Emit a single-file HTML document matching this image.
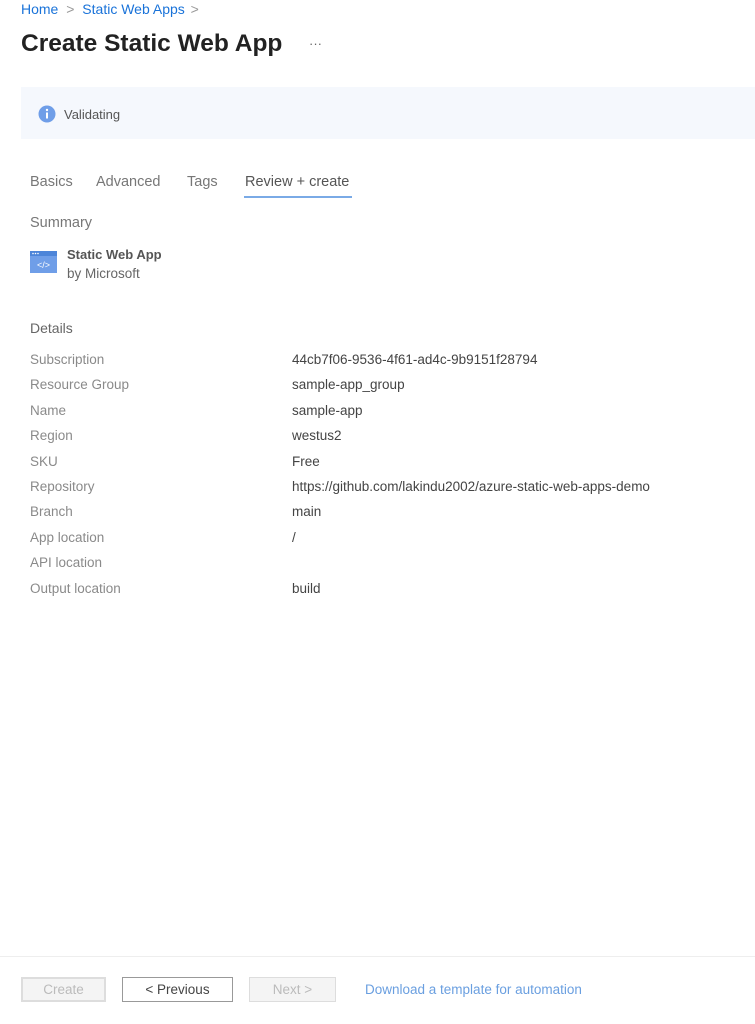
<!DOCTYPE html>
<html><head><meta charset="utf-8"><style>
body{margin:0;width:755px;height:1024px;background:#fff;font-family:"Liberation Sans",sans-serif;position:relative;overflow:hidden}
.a{position:absolute;white-space:nowrap}
.lbl{color:#8a8a8a;font-size:13.5px}
.val{color:#444;font-size:13.5px}
.btn{position:absolute;top:977px;height:25px;box-sizing:border-box;border:1px solid #ccc;font-size:13.5px;text-align:center;line-height:23px}
</style></head><body>
<div class="a" style="left:21px;top:1px;font-size:14px;color:#1a73d9">Home <span style="color:#999;margin:0 4px">&gt;</span> Static Web Apps <span style="color:#999;margin-left:2px">&gt;</span></div>
<div class="a" style="left:21px;top:30px;font-size:24.5px;color:#222;font-weight:600">Create Static Web App</div>
<div class="a" style="left:309px;top:36px;font-size:13px;color:#666">···</div>
<div class="a" style="left:21px;top:87px;width:734px;height:52px;background:#f5f8fd"></div>
<svg class="a" style="left:38px;top:105px" width="18" height="18" viewBox="0 0 18 18"><circle cx="9" cy="9" r="8.5" fill="#6f9ee8"/><rect x="8" y="7.5" width="2" height="6" fill="#fff"/><circle cx="9" cy="5" r="1.2" fill="#fff"/></svg>
<div class="a" style="left:64px;top:107px;font-size:13px;color:#555">Validating</div>
<div class="a" style="left:30px;top:174px;font-size:14.5px;color:#777">Basics</div>
<div class="a" style="left:96px;top:174px;font-size:14.5px;color:#777">Advanced</div>
<div class="a" style="left:187px;top:174px;font-size:14.5px;color:#777">Tags</div>
<div class="a" style="left:245px;top:174px;font-size:14.5px;color:#555">Review + create</div>
<div class="a" style="left:244px;top:196px;width:108px;height:2px;background:#7aaae6"></div>
<div class="a" style="left:30px;top:215px;font-size:14.5px;color:#777">Summary</div>
<svg class="a" style="left:30px;top:251px" width="27" height="22" viewBox="0 0 27 22"><rect width="27" height="22" fill="#6f9ee8"/><rect width="27" height="5" fill="#4d85d9"/><circle cx="3" cy="2.5" r=".8" fill="#fff"/><circle cx="5.5" cy="2.5" r=".8" fill="#fff"/><circle cx="8" cy="2.5" r=".8" fill="#fff"/><text x="13.5" y="17" font-size="9" fill="#fff" text-anchor="middle" font-family="Liberation Sans">&lt;/&gt;</text></svg>
<div class="a" style="left:67px;top:247px;font-size:13px;color:#555;font-weight:bold">Static Web App</div>
<div class="a" style="left:67px;top:266px;font-size:13.5px;color:#666">by Microsoft</div>
<div class="a" style="left:30px;top:320px;font-size:14px;color:#666">Details</div>
<div class="a lbl" style="left:30px;top:352px">Subscription</div><div class="a val" style="left:292px;top:352px">44cb7f06-9536-4f61-ad4c-9b9151f28794</div>
<div class="a lbl" style="left:30px;top:377px">Resource Group</div><div class="a val" style="left:292px;top:377px">sample-app_group</div>
<div class="a lbl" style="left:30px;top:403px">Name</div><div class="a val" style="left:292px;top:403px">sample-app</div>
<div class="a lbl" style="left:30px;top:428px">Region</div><div class="a val" style="left:292px;top:428px">westus2</div>
<div class="a lbl" style="left:30px;top:454px">SKU</div><div class="a val" style="left:292px;top:454px">Free</div>
<div class="a lbl" style="left:30px;top:479px">Repository</div><div class="a val" style="left:292px;top:479px">https://github.com/lakindu2002/azure-static-web-apps-demo</div>
<div class="a lbl" style="left:30px;top:504px">Branch</div><div class="a val" style="left:292px;top:504px">main</div>
<div class="a lbl" style="left:30px;top:530px">App location</div><div class="a val" style="left:292px;top:530px">/</div>
<div class="a lbl" style="left:30px;top:555px">API location</div>
<div class="a lbl" style="left:30px;top:581px">Output location</div><div class="a val" style="left:292px;top:581px">build</div>
<div class="a" style="left:0;top:956px;width:755px;height:1px;background:#eee"></div>
<div class="btn" style="left:21px;width:85px;background:#f4f4f4;color:#bbb;border:2px solid #ddd;line-height:21px">Create</div>
<div class="btn" style="left:122px;width:111px;border-color:#999;color:#444">&lt; Previous</div>
<div class="btn" style="left:249px;width:87px;background:#f4f4f4;color:#bbb;border-color:#ddd">Next &gt;</div>
<div class="a" style="left:365px;top:982px;font-size:13.5px;color:#6a9fe0">Download a template for automation</div>
</body></html>
